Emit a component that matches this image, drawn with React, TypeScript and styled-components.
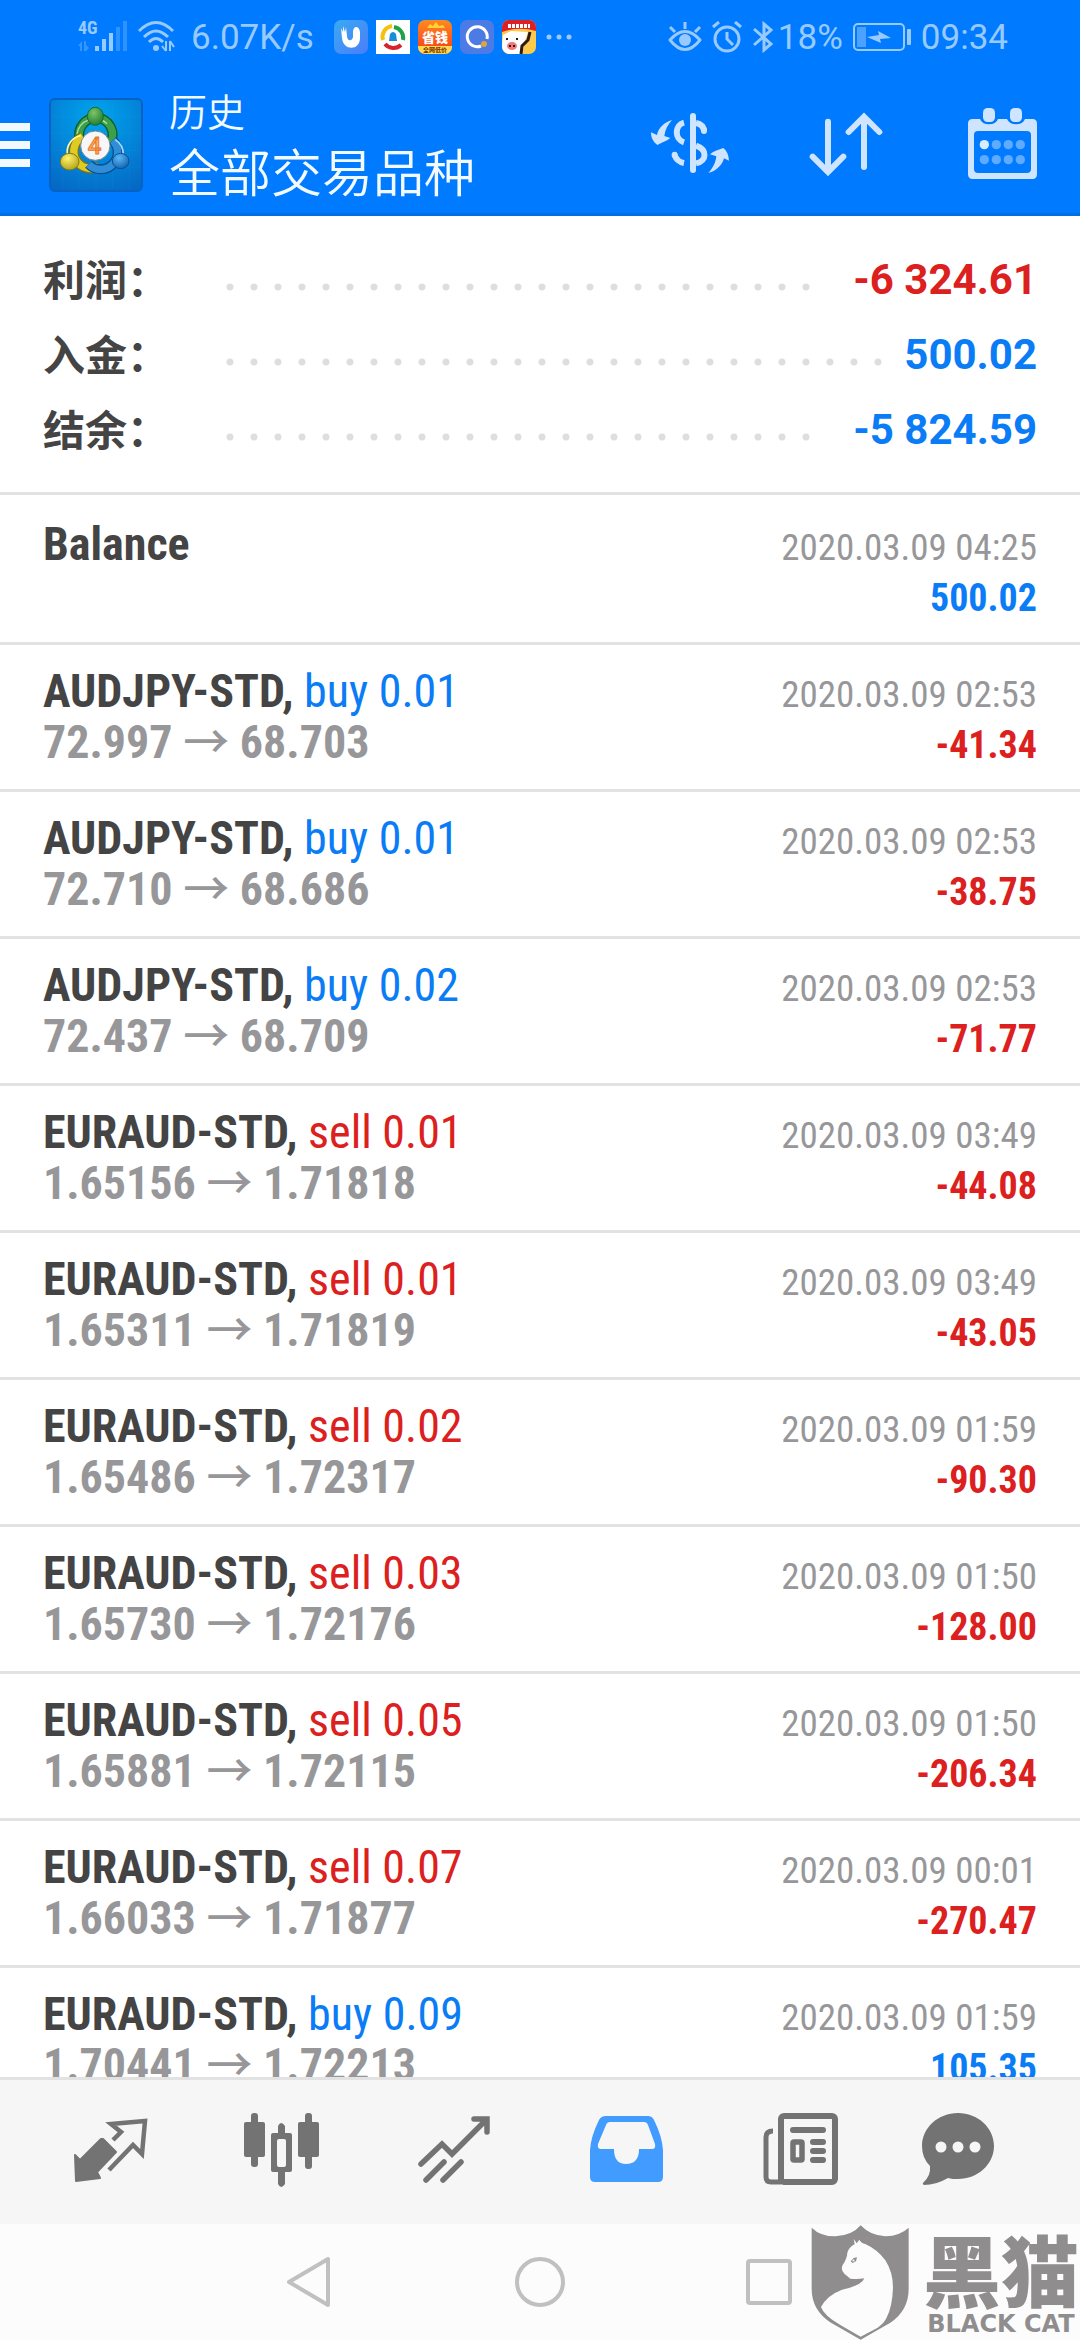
import React from "react";
import styled, { createGlobalStyle } from "styled-components";

type Tone = "loss" | "gain";

interface Deal {
	symbol: string;
	side: "buy" | "sell";
	volume: string;
	open: string;
	close: string;
	time: string;
	result: string;
}

const tones: Record<Tone, string> = {
	loss: "#dc2020",
	gain: "#0a7cf5",
};

const summary: { label: string; value: string; tone: Tone }[] = [
	{ label: "利润", value: "-6 324.61", tone: "loss" },
	{ label: "入金", value: "500.02", tone: "gain" },
	{ label: "结余", value: "-5 824.59", tone: "gain" },
];

const deals: Deal[] = [
	{ symbol: "AUDJPY-STD", side: "buy", volume: "0.01", open: "72.997", close: "68.703", time: "2020.03.09 02:53", result: "-41.34" },
	{ symbol: "AUDJPY-STD", side: "buy", volume: "0.01", open: "72.710", close: "68.686", time: "2020.03.09 02:53", result: "-38.75" },
	{ symbol: "AUDJPY-STD", side: "buy", volume: "0.02", open: "72.437", close: "68.709", time: "2020.03.09 02:53", result: "-71.77" },
	{ symbol: "EURAUD-STD", side: "sell", volume: "0.01", open: "1.65156", close: "1.71818", time: "2020.03.09 03:49", result: "-44.08" },
	{ symbol: "EURAUD-STD", side: "sell", volume: "0.01", open: "1.65311", close: "1.71819", time: "2020.03.09 03:49", result: "-43.05" },
	{ symbol: "EURAUD-STD", side: "sell", volume: "0.02", open: "1.65486", close: "1.72317", time: "2020.03.09 01:59", result: "-90.30" },
	{ symbol: "EURAUD-STD", side: "sell", volume: "0.03", open: "1.65730", close: "1.72176", time: "2020.03.09 01:50", result: "-128.00" },
	{ symbol: "EURAUD-STD", side: "sell", volume: "0.05", open: "1.65881", close: "1.72115", time: "2020.03.09 01:50", result: "-206.34" },
	{ symbol: "EURAUD-STD", side: "sell", volume: "0.07", open: "1.66033", close: "1.71877", time: "2020.03.09 00:01", result: "-270.47" },
	{ symbol: "EURAUD-STD", side: "buy", volume: "0.09", open: "1.70441", close: "1.72213", time: "2020.03.09 01:59", result: "105.35" },
];

const SignalIcon = () => (
	<svg width="50" height="34" viewBox="0 0 50 34" fill="#99caff">
		<text x="0" y="14" fontFamily="Roboto Condensed" fontSize="18" fontWeight="700">4G</text>
		<path d="M4 21v10H2v-5H0zM6 21h2v4l3 3-3 3H6z" opacity=".35" />
		<path d="M17 26h4v5h-4zM24 19h4v12h-4zM31 13h4v18h-4z" />
		<path d="M38 7h4v24h-4zM45 1h4v30h-4z" opacity=".3" />
	</svg>
);

const WifiIcon = () => (
	<svg width="37" height="34" viewBox="0 0 37 34" fill="none" stroke="#99caff" strokeWidth="3">
		<path d="M1 11Q18 -6 35 11M6 17Q18 5 30 17M11 22Q18 15 25 22" />
		<circle cx="18" cy="28" r="3" fill="#99caff" stroke="none" />
		<path d="M28 21v10M28 31l-4-5M32 31V21M32 21l4 6" strokeWidth="2" />
	</svg>
);

const AppBadges = () => (
	<svg width="202" height="34" viewBox="0 0 202 34">
		<defs>
			<linearGradient id="swan" x2="1" y2="1">
				<stop stopColor="#39aaf2" />
				<stop offset="1" stopColor="#4a7dfb" />
			</linearGradient>
			<linearGradient id="saver" x2="0" y2="1">
				<stop stopColor="#ff8a1f" />
				<stop offset="1" stopColor="#f6381c" />
			</linearGradient>
		</defs>
		<rect width="34" height="34" rx="7" fill="url(#swan)" />
		<path d="M7 8l2 4V6l2 6 1-5 1 9c0 5 5 6 6 1V12c0-6 6-7 7 0v6c0 13-17 13-18 0z" fill="#fff" />
		<rect x="42" width="34" height="34" fill="#fff" />
		<g fill="none" strokeWidth="4">
			<path d="M49 20a11 11 0 0 1 9-14" stroke="#f4c20d" />
			<path d="M60 7a11 11 0 0 1 9 13" stroke="#1fa34a" />
			<path d="M67 25a11 11 0 0 1-16-1" stroke="#d8232a" />
		</g>
		<path d="M55 21l1-7q3-4 6 0l1 7z" fill="#198fd3" />
		<rect x="84" width="34" height="34" rx="7" fill="url(#saver)" />
		<path d="M93 8l3-4 3 2 3-4 3 4 4-1 2 3z" fill="#ffd236" />
		<path d="M84 26h34v1a7 7 0 0 1-7 7H91a7 7 0 0 1-7-7z" fill="#ffdb4d" />
		<text x="101" y="22" textAnchor="middle" fontFamily="Noto Sans CJK SC" fontSize="13" fontWeight="900" fill="#fff">省钱</text>
		<text x="101" y="32" textAnchor="middle" fontFamily="Noto Sans CJK SC" fontSize="6" fontWeight="700" fill="#7a2c00">全网低价</text>
		<rect x="126" width="34" height="34" rx="7" fill="#4c7be6" />
		<path d="M147 26a10 10 0 1 1 6-7" fill="none" stroke="#fff" strokeWidth="3" />
		<circle cx="150" cy="24" r="3" fill="#e0a43a" />
		<rect x="168" width="34" height="34" rx="7" fill="#fbc94c" />
		<path d="M169 15l8-4 17 1-3 9-3 13h-12a8 8 0 0 1-8-8z" fill="#fff" />
		<path d="M196 12l-2 8-6 6-1 8" fill="none" stroke="#2c1a16" strokeWidth="3" />
		<path d="M168 12V7a7 7 0 0 1 7-7h20a7 7 0 0 1 7 7v4q-17-5-34 1z" fill="#dd1f26" />
		<path d="M174 6h22" stroke="#fff" strokeWidth="4" strokeDasharray="3 1" />
		<ellipse cx="178" cy="26" rx="5" ry="4" fill="#f3767b" />
		<path d="M172 19h2M182 19h2M176 25v2M180 25v2" stroke="#2c1a16" strokeWidth="2" />
	</svg>
);

const MoreDots = () => (
	<svg width="26" height="6" viewBox="0 0 26 6" fill="#99caff">
		<circle cx="3" cy="3" r="2.5" />
		<circle cx="13" cy="3" r="2.5" />
		<circle cx="23" cy="3" r="2.5" />
	</svg>
);

const EyeIcon = () => (
	<svg width="34" height="32" viewBox="0 0 34 32" fill="none" stroke="#99caff" strokeWidth="3">
		<path d="M2 19Q17 2 32 19Q17 38 2 19zM17 1v7M2 6l5 5M32 6l-5 5" strokeLinejoin="round" />
		<circle cx="17" cy="19" r="6" fill="#99caff" stroke="none" />
	</svg>
);

const AlarmIcon = () => (
	<svg width="30" height="32" viewBox="0 0 30 32" fill="none" stroke="#99caff" strokeWidth="3">
		<circle cx="15" cy="18" r="12" />
		<path d="M15 11v7l6 6M1 6l6-5M29 6l-6-5" />
	</svg>
);

const BluetoothIcon = () => (
	<svg width="22" height="32" viewBox="0 0 22 32" fill="none" stroke="#99caff" strokeWidth="3">
		<path d="M2 8l17 15-7 6V3l7 6L2 24" />
	</svg>
);

const BatteryIcon = () => (
	<svg width="58" height="28" viewBox="0 0 58 28">
		<rect x="1" y="1" width="50" height="26" rx="4" fill="none" stroke="#99caff" strokeWidth="2" />
		<rect x="4" y="4" width="9" height="20" fill="#4da2ff" />
		<path d="M14 14l12-2-1-4 13 7-11 1 1 4z" fill="#99caff" />
		<rect x="54" y="6" width="4" height="16" rx="1" fill="#99caff" />
	</svg>
);

const MetaLogo = () => (
	<svg width="94" height="94" viewBox="57 51 282 282">
		<defs>
			<radialGradient id="tile" cx=".5" cy=".2" r=".9">
				<stop stopColor="#00a5ee" />
				<stop offset="1" stopColor="#0567c4" />
			</radialGradient>
			<radialGradient id="green" cx=".4" cy=".3" r=".8">
				<stop stopColor="#7cc56b" />
				<stop offset="1" stopColor="#17752a" />
			</radialGradient>
			<radialGradient id="yellow" cx=".4" cy=".3" r=".8">
				<stop stopColor="#fff46b" />
				<stop offset="1" stopColor="#a99a12" />
			</radialGradient>
			<radialGradient id="blue" cx=".4" cy=".3" r=".8">
				<stop stopColor="#5cb8f5" />
				<stop offset="1" stopColor="#0a5ba8" />
			</radialGradient>
		</defs>
		<rect x="60" y="54" width="276" height="276" rx="14" fill="url(#tile)" stroke="#0762c4" strokeWidth="6" />
		<path d="M98 60v264M146 60v264M198 60v264M248 60v264M298 60v264M64 106h268M64 156h268M64 208h268M64 258h268" stroke="#29aef0" strokeWidth="1" opacity=".35" />
		<path d="M150 176a50 50 0 1 1 92 8" fill="none" stroke="#0f5c28" strokeWidth="30" />
		<path d="M150 176a50 50 0 1 1 92 8" fill="none" stroke="#3ba04a" strokeWidth="22" />
		<path d="M141 160a54 54 0 0 1 90-32" fill="none" stroke="#b4dfa0" strokeWidth="4" />
		<path d="M158 166a50 50 0 1 0 50 90" fill="none" stroke="#7c7411" strokeWidth="30" />
		<path d="M158 166a50 50 0 1 0 50 90" fill="none" stroke="#e1ca24" strokeWidth="22" />
		<path d="M152 164a50 50 0 0 0-40 56" fill="none" stroke="#fff79a" strokeWidth="5" />
		<path d="M248 178a50 50 0 1 1-72 72" fill="none" stroke="#0a4f94" strokeWidth="30" />
		<path d="M248 178a50 50 0 1 1-72 72" fill="none" stroke="#2f8ed8" strokeWidth="22" />
		<path d="M256 176a54 54 0 0 1 24 44" fill="none" stroke="#a5dbff" strokeWidth="5" />
		<ellipse cx="196" cy="106" rx="24" ry="27" fill="url(#green)" stroke="#176a2a" strokeWidth="3" />
		<ellipse cx="119" cy="242" rx="28" ry="25" fill="url(#yellow)" stroke="#857b12" strokeWidth="3" />
		<ellipse cx="272" cy="240" rx="25" ry="23" fill="url(#blue)" stroke="#0a4f94" strokeWidth="3" />
		<circle cx="196" cy="194" r="44" fill="#f7f7fb" stroke="#7b8a85" strokeWidth="3" />
		<text x="194" y="219" textAnchor="middle" fontFamily="Roboto" fontSize="72" fontWeight="500" fill="#ffb25a" stroke="#e8762b" strokeWidth="3">4</text>
	</svg>
);

const MenuIcon = () => (
	<svg width="30" height="44" viewBox="0 0 30 44" fill="#f2faff">
		<path d="M0 0h30v8H0zM0 18h30v8H0zM0 36h30v8H0z" />
	</svg>
);

const CurrencyIcon = () => (
	<svg width="78" height="78" viewBox="213 315 234 234" fill="none" stroke="#cfe5ff" strokeWidth="18">
		<path d="M339 345V507" strokeLinecap="round" />
		<path d="M312 365C284 372 282 414 312 424" />
		<path d="M348 366Q370 370 372 390M348 434C382 446 382 480 348 487M312 486Q290 482 284 462" />
		<path d="M372 386v4M284 461v2" strokeLinecap="round" />
		<path d="M276 357C254 363 234 382 231 402L213 394C213 412 221 424 232 432C246 424 258 422 271 411L253 405C255 386 264 370 276 357zM385 516C410 510 428 490 432 472L447 479C446 461 440 449 430 441C416 446 402 449 390 460L409 466C407 486 398 502 385 516z" fill="#cfe5ff" stroke="none" />
	</svg>
);

const SortIcon = () => (
	<svg width="78" height="78" viewBox="681 315 234 234" fill="none" stroke="#cfe5ff" strokeWidth="18" strokeLinecap="round">
		<path d="M744 362V512M698 467L744 513L790 467M852 498V348M806 393L852 347L898 393" />
	</svg>
);

const CalendarIcon = () => (
	<svg width="78" height="78" viewBox="1149 315 234 234" fill="#cfe5ff">
		<path fillRule="evenodd" d="M1178 354H1200Q1206 370 1227 370Q1248 370 1254 354H1281Q1288 370 1308 370Q1329 370 1335 354H1357Q1371 354 1371 368V520Q1371 534 1357 534H1178Q1164 534 1164 520V368Q1164 354 1178 354ZM1194 390Q1182 390 1182 402V504Q1182 516 1194 516H1340Q1353 516 1353 504V402Q1353 390 1340 390Z" />
		<rect x="1209" y="321" width="36" height="42" rx="14" />
		<rect x="1290" y="321" width="36" height="42" rx="14" />
		<circle cx="1213" cy="431" r="14" fill="#d8ecff" />
		<g fill="#5eabff">
			<circle cx="1249" cy="431" r="14" />
			<circle cx="1285" cy="431" r="14" />
			<circle cx="1321" cy="431" r="14" />
			<circle cx="1213" cy="476" r="14" />
			<circle cx="1249" cy="476" r="14" />
			<circle cx="1285" cy="476" r="14" />
			<circle cx="1321" cy="476" r="14" />
		</g>
	</svg>
);

const QuotesIcon = () => (
	<svg width="96" height="96" viewBox="0 0 96 96" fill="currentColor">
		<path d="M51 36L59 28L49 20L83 17L80 50L71 41L47 66" fill="none" stroke="currentColor" strokeWidth="4.5" />
		<path d="M41 35L54 48L35 68L38 74L14 77L13 51L18 56L39 35z" stroke="currentColor" strokeWidth="2" strokeLinejoin="round" />
	</svg>
);

const CandlesIcon = () => (
	<svg width="96" height="96" viewBox="0 0 96 96" fill="currentColor">
		<rect x="10" y="18" width="21" height="35" rx="2" />
		<rect x="17" y="9" width="7" height="54" rx="3" />
		<path fillRule="evenodd" d="M39 29H56Q58 29 58 31V66Q58 68 56 68H39Q37 68 37 66V31Q37 29 39 29zM45 35Q43 35 43 37V61Q43 63 45 63H50Q52 63 52 61V37Q52 35 50 35z" />
		<path d="M44 30V22Q47 16 51 22V30zM44 67V80Q47 86 51 80V67z" />
		<rect x="64" y="18" width="21" height="35" rx="2" />
		<rect x="71" y="9" width="7" height="56" rx="3" />
	</svg>
);

const TrendIcon = () => (
	<svg width="96" height="96" viewBox="0 0 96 96" fill="none" stroke="currentColor" strokeWidth="5.5" strokeLinecap="round">
		<path d="M15 60L36 40L46 50L80 16M68 15H81V28" />
		<path d="M20 76L38 58M37 76L55 58" />
	</svg>
);

const InboxIcon = () => (
	<svg width="96" height="96" viewBox="0 0 96 96" fill="currentColor">
		<path fillRule="evenodd" d="M28 12H70Q74 12 76 16Q84 32 85 46V73Q85 78 80 78H17Q12 78 12 73V46Q13 32 21 16Q23 12 28 12zM32 18Q29 18 28 21L20 40Q19 45 23 45H36Q36 60 48 60Q61 60 61 45H74Q78 45 77 40L70 21Q69 18 66 18z" />
	</svg>
);

const NewsIcon = () => (
	<svg width="96" height="96" viewBox="0 0 96 96" fill="none" stroke="currentColor" strokeWidth="6">
		<rect x="31" y="12" width="54" height="66" rx="3" />
		<path d="M23 27Q16 27 16 33V73Q16 78 21 78H31" strokeWidth="5" />
		<path d="M43 26H73M63 38H73M63 47H73M63 56H73" strokeLinecap="round" />
		<rect x="43" y="38" width="9" height="18" strokeWidth="5.5" rx="1" />
	</svg>
);

const ChatIcon = () => (
	<svg width="96" height="96" viewBox="0 0 96 96" fill="currentColor">
		<path d="M36 9C56 9 72 24 72 42C72 60 56 75 36 75C32 75 29 75 26 74Q14 81 2 81Q0 80 1 79Q9 72 8 62Q0 54 0 42C0 24 16 9 36 9z" />
		<g fill="#f6f6f6">
			<circle cx="19" cy="43" r="5.5" />
			<circle cx="36" cy="43" r="5.5" />
			<circle cx="53" cy="43" r="5.5" />
		</g>
	</svg>
);

const BackIcon = () => (
	<svg width="60" height="60" viewBox="0 0 60 60">
		<path d="M9 30L48 7V53z" />
	</svg>
);

const HomeIcon = () => (
	<svg width="60" height="60" viewBox="0 0 60 60">
		<circle cx="30" cy="30" r="23" />
	</svg>
);

const RecentIcon = () => (
	<svg width="60" height="60" viewBox="0 0 60 60">
		<rect x="8" y="9" width="42" height="42" rx="2" />
	</svg>
);

const CatShield = () => (
	<svg width="98" height="115" viewBox="62 74 294 345">
		<path d="M64 82Q90 108 135 108Q185 106 211 75Q240 106 285 108Q330 106 355 82V265Q355 330 300 367L211 418L122 367Q64 330 64 265z" fill="#8f8d8e" />
		<path d="M190 116L199 129L207 118Q212 128 225 131Q262 148 285 180Q308 215 308 262Q306 320 288 354Q280 370 262 382L211 409L150 374Q100 345 92 320Q110 285 155 268Q215 255 222 234Q200 238 180 235Q172 228 162 220Q150 208 157 194Q170 175 171 157Q176 140 193 132z" fill="#fcfcfc" />
		<path d="M181 183l9-10 10-2-3 12-10 5z" fill="#8f8d8e" />
		<path d="M185 182l6-6 2 8z" fill="#fcfcfc" />
	</svg>
);

const tabs = [
	{ name: "行情", icon: <QuotesIcon /> },
	{ name: "图表", icon: <CandlesIcon /> },
	{ name: "交易", icon: <TrendIcon /> },
	{ name: "历史", icon: <InboxIcon />, active: true },
	{ name: "新闻", icon: <NewsIcon /> },
	{ name: "聊天", icon: <ChatIcon /> },
];

const DealRow: React.FC<{ deal: Deal }> = ({ deal }) => (
	<HistoryItem>
		<Symbol>
			{deal.symbol}, <Side $tone={deal.side === "buy" ? "gain" : "loss"}>{deal.side} {deal.volume}</Side>
		</Symbol>
		<Time>{deal.time}</Time>
		<Prices>
			{deal.open} <Arrow>→</Arrow> {deal.close}
		</Prices>
		<Result $tone={deal.result.startsWith("-") ? "loss" : "gain"}>{deal.result}</Result>
	</HistoryItem>
);

export default function App() {
	return (
		<Page>
			<GlobalStyle />
			<Header>
				<StatusBar>
					<StatusGroup>
						<SignalIcon />
						<WifiIcon />
						<Speed>6.07K/s</Speed>
						<AppBadges />
						<MoreDots />
					</StatusGroup>
					<StatusGroup>
						<EyeIcon />
						<AlarmIcon />
						<Charge>
							<BluetoothIcon />
							18%
						</Charge>
						<BatteryIcon />
						<span>09:34</span>
					</StatusGroup>
				</StatusBar>
				<Toolbar>
					<IconButton aria-label="菜单"><MenuIcon /></IconButton>
					<Logo><MetaLogo /></Logo>
					<Titles>
						<Subtitle>历史</Subtitle>
						<Title>全部交易品种</Title>
					</Titles>
					<Actions>
						<IconButton aria-label="货币"><CurrencyIcon /></IconButton>
						<IconButton aria-label="排序"><SortIcon /></IconButton>
						<IconButton aria-label="日期"><CalendarIcon /></IconButton>
					</Actions>
				</Toolbar>
			</Header>
			<Main>
				<Summary>
					{summary.map((line) => (
						<SummaryLine key={line.label}>
							<SummaryLabel>{line.label}：</SummaryLabel>
							<Leader><Dots /></Leader>
							<SummaryValue $tone={line.tone}>{line.value}</SummaryValue>
						</SummaryLine>
					))}
				</Summary>
				<History>
					<HistoryItem $tall>
						<Symbol>Balance</Symbol>
						<Time>2020.03.09 04:25</Time>
						<Prices />
						<Result $tone="gain">500.02</Result>
					</HistoryItem>
					{deals.map((deal, index) => (
						<DealRow key={index} deal={deal} />
					))}
				</History>
			</Main>
			<TabBar>
				{tabs.map((tab) => (
					<Tab key={tab.name} $active={tab.active} aria-label={tab.name}>{tab.icon}</Tab>
				))}
			</TabBar>
			<SystemNav>
				<IconButton aria-label="返回"><BackIcon /></IconButton>
				<IconButton aria-label="主屏幕"><HomeIcon /></IconButton>
				<IconButton aria-label="最近任务"><RecentIcon /></IconButton>
			</SystemNav>
			<Watermark>
				<CatShield />
				<Brand>
					<BrandName>黑猫</BrandName>
					<BrandLatin>BLACK CAT</BrandLatin>
				</Brand>
			</Watermark>
		</Page>
	);
}

const GlobalStyle = createGlobalStyle`
	* {
		box-sizing: border-box;
	}

	body {
		margin: 0;
		background: #fff;
		font-family: Roboto, "Noto Sans CJK SC", sans-serif;
	}

	svg {
		display: block;
		flex: none;
	}
`;

const Page = styled.div`
	position: relative;
	display: flex;
	flex-direction: column;
	height: 100vh;
	overflow: hidden;
`;

const Header = styled.header`
	background: #007aff;
	box-shadow: inset 0 -3px 0 #006fe6;
`;

const StatusBar = styled.div`
	display: flex;
	align-items: center;
	justify-content: space-between;
	height: 74px;
	padding: 0 72px 0 78px;
	color: #99caff;
	font-size: 35px;
`;

const StatusGroup = styled.div`
	display: flex;
	align-items: center;
	gap: 10px;
`;

const Speed = styled.span`
	margin: 0 10px 0 6px;
`;

const Charge = styled.span`
	display: flex;
	align-items: center;
	gap: 4px;
`;

const Toolbar = styled.div`
	display: flex;
	align-items: center;
	height: 142px;
	padding-right: 39px;
`;

const IconButton = styled.button`
	display: flex;
	align-items: center;
	justify-content: center;
	padding: 0;
	border: 0;
	background: none;
`;

const Logo = styled.div`
	margin: 0 26px 0 19px;
`;

const Titles = styled.div`
	flex: 1;
	padding-bottom: 6px;
	color: #f2faff;
	font-family: "Noto Sans CJK SC", sans-serif;
	font-weight: 350;
`;

const Subtitle = styled.div`
	font-size: 38px;
	line-height: 56px;
`;

const Title = styled.h1`
	margin: 0;
	font-size: 51px;
	font-weight: inherit;
	line-height: 64px;
`;

const Actions = styled.div`
	display: flex;
	gap: 78px;
`;

const Main = styled.main`
	flex: 1;
	min-height: 0;
	overflow-y: auto;
	scrollbar-width: none;
`;

const Summary = styled.dl`
	margin: 0;
	padding: 26px 43px 25px;
	border-bottom: 3px solid #e2e2e2;
`;

const SummaryLine = styled.div`
	display: flex;
	align-items: center;
	height: 75px;
	font-size: 42px;
	font-weight: 700;
	line-height: 75px;
`;

const SummaryLabel = styled.dt`
	width: 175px;
	padding-bottom: 4px;
	color: #444;
	font-family: "Noto Sans CJK SC", sans-serif;
`;

const Leader = styled.span`
	flex: 1;
	margin: 15px 14px 0 0;
`;

const Dots = styled.span`
	display: block;
	width: round(down, 100%, 24px);
	height: 8px;
	background: radial-gradient(circle, #dedede 3px, transparent 4px) 0 0 / 24px 8px;
`;

const SummaryValue = styled.dd<{ $tone: Tone }>`
	margin: 0;
	color: ${(props) => tones[props.$tone]};
`;

const History = styled.ul`
	margin: 0;
	padding: 0;
	list-style: none;
	font-family: "Roboto Condensed", "Liberation Sans Narrow", "Noto Sans CJK SC", sans-serif;
`;

const HistoryItem = styled.li<{ $tall?: boolean }>`
	display: grid;
	grid-template-columns: 1fr auto;
	grid-template-rows: 51px 51px;
	align-items: baseline;
	height: ${(props) => (props.$tall ? 150 : 147)}px;
	padding: ${(props) => (props.$tall ? 24 : 21)}px 43px 0;
	border-bottom: 3px solid #e2e2e2;
	line-height: 51px;
`;

const Symbol = styled.div`
	color: #444;
	font-size: 46px;
	font-weight: 700;
`;

const Side = styled.span<{ $tone: Tone }>`
	color: ${(props) => tones[props.$tone]};
	font-weight: 400;
`;

const Time = styled.time`
	color: #97979a;
	font-size: 37px;
	text-align: right;
`;

const Prices = styled.div`
	color: #97979a;
	font-size: 46px;
	font-weight: 700;

	/* keeps the baseline when a row has no prices */
	&:empty::before {
		content: "\\200b";
	}
`;

const Arrow = styled.span`
	font-family: "Noto Sans CJK SC", sans-serif;
	font-weight: 500;
	line-height: 0;
`;

const Result = styled.div<{ $tone: Tone }>`
	color: ${(props) => tones[props.$tone]};
	font-size: 38px;
	font-weight: 700;
	text-align: right;
`;

const TabBar = styled.nav`
	display: flex;
	height: 147px;
	padding: 0 24px;
	border-top: 3px solid #e2e2e2;
	background: #f6f6f6;
`;

const Tab = styled.button<{ $active?: boolean }>`
	display: flex;
	flex: 1;
	align-items: center;
	justify-content: center;
	padding: 0;
	border: 0;
	background: none;
	color: ${(props) => (props.$active ? "#429bff" : "#737373")};
`;

const SystemNav = styled.nav`
	display: grid;
	grid-template-columns: repeat(3, 1fr);
	height: 116px;
	padding: 0 18%;
	background: #fcfcfc;
	fill: none;
	stroke: #c0c0c0;
	stroke-width: 4px;
	stroke-linejoin: round;
`;

const Watermark = styled.div`
	position: absolute;
	right: 1px;
	bottom: 0;
	display: flex;
	gap: 14px;
	color: #8f8d8e;
	pointer-events: none;
`;

const Brand = styled.div`
	display: flex;
	flex-direction: column;
	align-items: center;
`;

const BrandName = styled.span`
	font-family: "Noto Sans CJK SC", sans-serif;
	font-size: 78px;
	font-weight: 900;
	line-height: 86px;
`;

const BrandLatin = styled.span`
	font-family: "DejaVu Sans", sans-serif;
	font-size: 24px;
	font-weight: 700;
	line-height: 26px;
`;
